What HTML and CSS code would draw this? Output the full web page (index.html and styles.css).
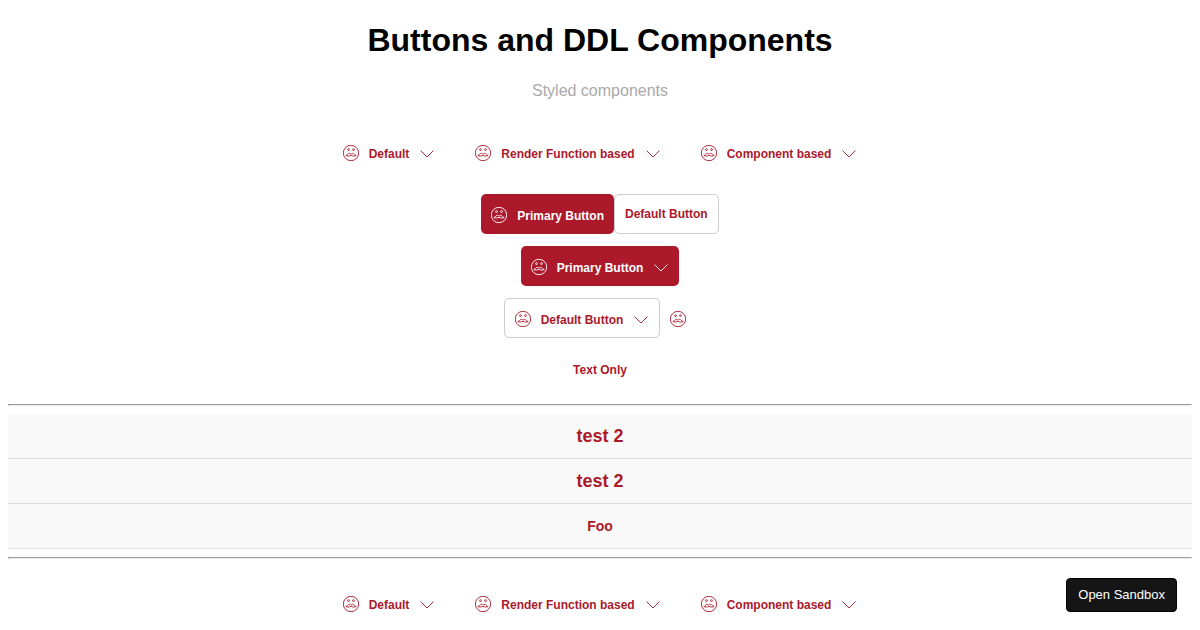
FILE: index.html
```html
<!DOCTYPE html>
<html lang="en">
<head>
    <meta charset="UTF-8">
    <meta name="viewport" content="width=device-width, initial-scale=1">
    <title>Buttons and DDL Components</title>
    <link rel="stylesheet" href="styles.css">
</head>
<body>
    <svg class="sprite" aria-hidden="true">
        <symbol id="face" viewBox="0 0 16 16">
            <circle cx="8" cy="8" r="7.7"/>
            <circle cx="5.5" cy="4.6" r="0.9"/>
            <circle cx="10.5" cy="4.6" r="0.9"/>
            <path d="M2.8 10.4C4.6 10.6 4.8 8.3 6.4 8.3C7.2 8.3 7.7 8.7 8 9.2C8.3 8.7 8.8 8.3 9.6 8.3C11.2 8.3 11.4 10.6 13.2 10.4C11.8 11.4 9.4 11.2 8 10.2C6.6 11.2 4.2 11.4 2.8 10.4Z"/>
        </symbol>
        <symbol id="arrow" viewBox="0 0 16 16">
            <path d="M1.5 5.5L8 12L14.5 5.5"/>
        </symbol>
    </svg>

    <h1>Buttons and DDL Components</h1>
    <p class="subtitle">Styled components</p>

    <div class="menu">
        <button class="btn icon"><svg><use href="#face"/></svg><span>Default</span><svg><use href="#arrow"/></svg></button>
        <button class="btn icon"><svg><use href="#face"/></svg><span>Render Function based</span><svg><use href="#arrow"/></svg></button>
        <button class="btn icon"><svg><use href="#face"/></svg><span>Component based</span><svg><use href="#arrow"/></svg></button>
    </div>

    <div class="buttons">
        <div class="row">
            <button class="btn icon primary"><svg><use href="#face"/></svg><span>Primary Button</span></button>
            <button class="btn default">Default Button</button>
        </div>
        <div class="row">
            <button class="btn icon primary"><svg><use href="#face"/></svg><span>Primary Button</span><svg><use href="#arrow"/></svg></button>
        </div>
        <div class="row">
            <button class="btn icon default"><svg><use href="#face"/></svg><span>Default Button</span><svg><use href="#arrow"/></svg></button>
            <button class="btn icon" aria-label="Icon only"><svg><use href="#face"/></svg></button>
        </div>
        <div class="row">
            <button class="btn">Text Only</button>
        </div>
    </div>

    <hr>
    <ul class="list">
        <li><a href="#">test 2</a></li>
        <li><a href="#">test 2</a></li>
        <li><a href="#" class="small">Foo</a></li>
    </ul>
    <hr>

    <div class="menu">
        <button class="btn icon"><svg><use href="#face"/></svg><span>Default</span><svg><use href="#arrow"/></svg></button>
        <button class="btn icon"><svg><use href="#face"/></svg><span>Render Function based</span><svg><use href="#arrow"/></svg></button>
        <button class="btn icon"><svg><use href="#face"/></svg><span>Component based</span><svg><use href="#arrow"/></svg></button>
    </div>

    <button class="sandbox">Open Sandbox</button>
</body>
</html>
```

FILE: styles.css
```css
* {
    box-sizing: border-box;
}

body {
    margin: 8px;
    font-family: "Liberation Sans", Helvetica, Arial, sans-serif;
    text-align: center;
    background: #fff;
}

h1 {
    margin: 0;
    padding-top: 13px;
    font-size: 32px;
    line-height: 38px;
}

.subtitle {
    margin: 23px 0 0;
    font-size: 16px;
    line-height: 18px;
    color: #a9a9a9;
}

.sprite {
    display: none;
}

.btn svg {
    width: 16px;
    height: 16px;
    fill: none;
    stroke: currentColor;
    stroke-width: 0.9;
    overflow: visible;
}

.menu {
    display: flex;
    justify-content: center;
    gap: 20px;
    padding: 32px 0 0;
}

.btn {
    display: flex;
    align-items: center;
    gap: 10px;
    height: 40px;
    padding: 0 10px;
    border: 0;
    border-radius: 5px;
    background: none;
    font-family: inherit;
    font-size: 12px;
    font-weight: bold;
    line-height: 16px;
    color: #ab192a;
    cursor: pointer;
}

.btn.icon {
    padding-top: 2px;
}

.btn span {
    padding-top: 2px;
}

.btn.primary {
    background: #ab192a;
    color: #fff;
}

.btn.default {
    background: #fff;
    border: 1px solid #ccc;
}

.buttons {
    display: flex;
    flex-direction: column;
    gap: 12px;
    padding: 22px 0 14px;
}

.row {
    display: flex;
    justify-content: center;
}

hr {
    margin: 0;
}

.list {
    list-style: none;
    margin: 8px 0;
    padding: 0;
}

.list li {
    border-bottom: 1px solid #ddd;
    background: #f9f9f9;
}

.list a {
    display: block;
    font-size: 18px;
    font-weight: bold;
    line-height: 44px;
    color: #ab192a;
    text-decoration: none;
}

.list a.small {
    font-size: 14px;
}

.list + hr + .menu {
    padding-top: 24px;
}

/* stays in the corner while the page scrolls */
.sandbox {
    position: fixed;
    right: 23px;
    bottom: 18px;
    height: 34px;
    padding: 0 11px 2px;
    border: 1px solid #040404;
    border-radius: 4px;
    background: #151515;
    font-family: inherit;
    font-size: 13px;
    color: #fff;
    cursor: pointer;
}
```
